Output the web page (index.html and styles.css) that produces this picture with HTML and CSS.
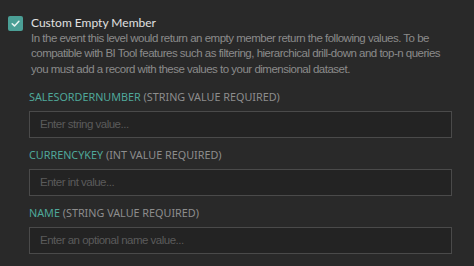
FILE: index.html
```html
<!DOCTYPE html>
<html>
<head>
<meta charset="utf-8">
<link rel="stylesheet" href="styles.css">
</head>
<body>
<div class="panel">
  <div class="header">
    <span class="check">
      <svg viewBox="0 0 15 15" width="15" height="15"><path d="M4.2 7.7 L6.5 9.9 L10.9 5.3" fill="none" stroke="#e8f4f2" stroke-width="1.5" stroke-linecap="round" stroke-linejoin="round"/></svg>
    </span>
    <div class="htext">
      <div class="title">Custom Empty Member</div>
      <p class="desc">In the event this level would return an empty member return the following values. To be compatible with BI Tool features such as filtering, hierarchical drill-down and top-n queries you must add a record with these values to your dimensional dataset.</p>
    </div>
  </div>
  <div class="fields">
    <div class="field">
      <div class="label"><span class="key">SALESORDERNUMBER</span> <span class="hint">(STRING VALUE REQUIRED)</span></div>
      <div class="input">Enter string value...</div>
    </div>
    <div class="field">
      <div class="label"><span class="key">CURRENCYKEY</span> <span class="hint">(INT VALUE REQUIRED)</span></div>
      <div class="input">Enter int value...</div>
    </div>
    <div class="field">
      <div class="label"><span class="key">NAME</span> <span class="hint">(STRING VALUE REQUIRED)</span></div>
      <div class="input">Enter an optional name value...</div>
    </div>
  </div>
</div>
</body>
</html>
```
FILE: styles.css
```css
html, body {
  margin: 0;
  padding: 0;
  background: #292929;
  width: 474px;
  height: 266px;
  overflow: hidden;
}
.panel {
  padding: 15px 0 0 8px;
}
.header {
  display: flex;
  gap: 8px;
  align-items: flex-start;
}
.check {
  width: 15px;
  height: 15px;
  margin-top: 1px;
  background: #4b9f96;
  border-radius: 2px;
  display: flex;
  flex: none;
}
.htext {
  flex: 1;
}
.title {
  font-family: Lato, "Noto Sans", sans-serif;
  color: #e0e0e0;
  font-size: 12px;
  line-height: 15px;
}
.desc {
  font-family: "Liberation Sans", Arial, sans-serif;
  margin: 1px 0 0 0;
  color: #8b8b8b;
  font-size: 11.5px;
  letter-spacing: -0.5px;
  line-height: 15.3px;
  width: 425px;
}
.fields {
  margin: 13px 0 0 21px;
  width: 423px;
  display: flex;
  flex-direction: column;
  gap: 10px;
}
.label {
  font-family: "Noto Sans", "Open Sans", sans-serif;
  font-size: 10.8px;
  line-height: 14px;
  margin-bottom: 7px;
}
.key {
  color: #4fa89a;
}
.hint {
  color: #8d8d8d;
}
.input {
  box-sizing: border-box;
  height: 27px;
  border: 1px solid #4a4a4a;
  background: #232323;
  color: #5b5b5b;
  font-family: "Liberation Sans", Arial, sans-serif;
  font-size: 11.5px;
  letter-spacing: -0.5px;
  line-height: 25px;
  padding-left: 10px;
}
```
